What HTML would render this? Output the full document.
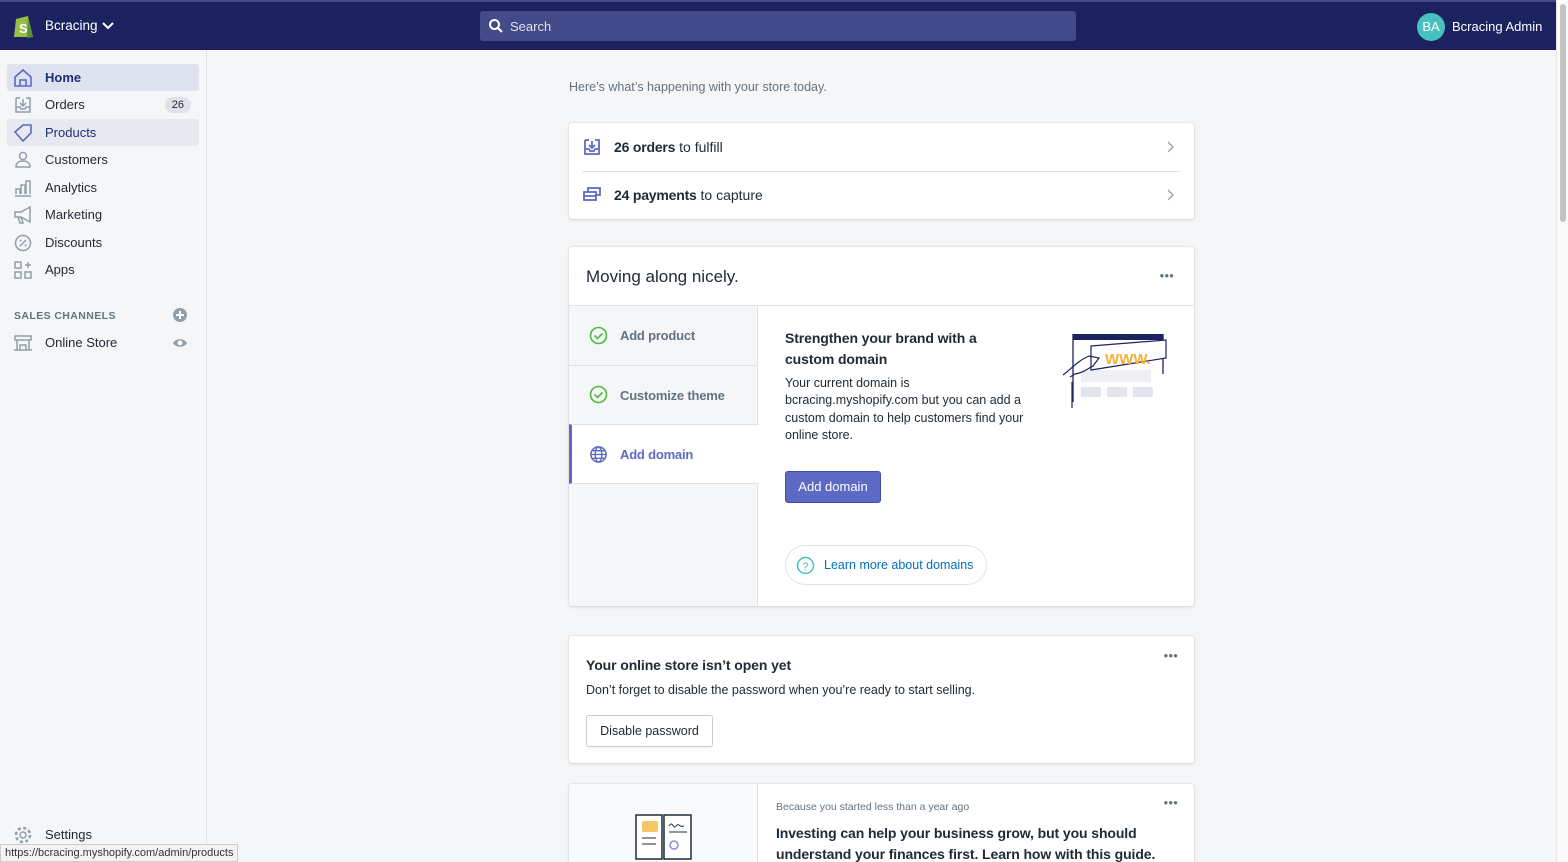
<!DOCTYPE html>
<html style="overflow:hidden;height:862px"><head><style>
*{box-sizing:border-box;margin:0;padding:0}
body{width:1568px;height:862px;overflow:hidden;background:#f4f6f8;font-family:"Liberation Sans",sans-serif;color:#212b36;position:relative;font-size:14px}
.top{position:absolute;left:0;top:0;width:1556px;height:50px;background:#1c2260;border-top:2px solid #3f4a8a}
.side{position:absolute;left:0;top:50px;width:207px;height:812px;background:#f4f6f8;border-right:1px solid #dfe3e8}
.nav{position:absolute;left:7px;width:192px;height:27px;border-radius:3px;font-size:13px;line-height:27px;padding-left:38px;color:#212b36}
.nav svg{position:absolute;left:6px;top:4px}
.card{position:absolute;left:569px;width:625px;background:#fff;border-radius:3px;box-shadow:0 0 0 1px rgba(63,63,68,.05),0 1px 3px rgba(63,63,68,.15)}
.sb{position:absolute;right:0;top:0;width:12px;height:862px;background:#fafafa;border-left:1px solid #e8e8e8}
.sb div{position:absolute;left:3px;top:4px;width:6px;height:218px;border-radius:3px;background:#c2c2c2}
b{letter-spacing:-.2px}
.dots{position:absolute;font-size:8px;color:#637381;letter-spacing:0}
</style></head><body>
<div class="top">
<svg style="position:absolute;left:13px;top:11px" width="22" height="26" viewBox="0 0 22 26"><path d="M3 6 L15 3 L20 24 L1 24 Z" fill="#95bf47"/><path d="M15 3 L20 24 L14 25 Z" fill="#5e8e3e"/><text x="6" y="20" font-size="13" font-weight="bold" fill="#fff" font-family="Liberation Sans">S</text></svg>
<div style="position:absolute;left:45px;top:16px;color:#fff;font-size:13.5px">Bcracing</div>
<svg style="position:absolute;left:102px;top:20px" width="12" height="8"><path d="M1 1l5 5 5-5" stroke="#fff" stroke-width="2" fill="none"/></svg>
<div style="position:absolute;left:480px;top:9px;width:596px;height:30px;background:#434a8a;border-radius:3px"><svg style="position:absolute;left:8px;top:7px" width="16" height="16"><circle cx="6.5" cy="6.5" r="4.5" stroke="#fff" stroke-width="2" fill="none"/><path d="M10 10l4 4" stroke="#fff" stroke-width="2"/></svg><span style="position:absolute;left:30px;top:8px;color:#dfe3e8;font-size:13px">Search</span></div>
<div style="position:absolute;left:1417px;top:11px;width:28px;height:28px;border-radius:50%;background:#47c1bf;color:#fff;font-size:13px;line-height:28px;text-align:center">BA</div>
<div style="position:absolute;left:1452px;top:17px;color:#fff;font-size:13px">Bcracing Admin</div>
</div>
<div class="side">
<div class="nav" style="top:14px;background:#dfe3ef;color:#202e78;font-weight:bold"><svg width="20" height="20" viewBox="0 0 20 20"><path d="M2 9L10 2l8 7v9H2z M7 18v-6h6v6" stroke="#5c6ac4" stroke-width="1.6" fill="none"/></svg>Home</div>
<div class="nav" style="top:41px"><svg width="20" height="20" viewBox="0 0 20 20"><path d="M3 3h4M13 3h4v14H3V3M3 12h4l1 2h4l1-2h4M10 4v6M7 8l3 3 3-3" stroke="#919eab" stroke-width="1.5" fill="none"/></svg>Orders<span style="position:absolute;right:8px;top:6px;background:#dfe3e8;border-radius:10px;font-size:11px;line-height:16px;padding:0 7px">26</span></div>
<div class="nav" style="top:69px;background:#e6e9ef;color:#202e78"><svg width="20" height="20" viewBox="0 0 20 20"><path d="M2 9l8-7h8v8l-8 8z" stroke="#5c6ac4" stroke-width="1.6" fill="none"/></svg>Products</div>
<div class="nav" style="top:96px"><svg width="20" height="20" viewBox="0 0 20 20"><circle cx="10" cy="6" r="3.5" stroke="#919eab" stroke-width="1.5" fill="none"/><path d="M3 17c0-4 3-6 7-6s7 2 7 6z" stroke="#919eab" stroke-width="1.5" fill="none"/></svg>Customers</div>
<div class="nav" style="top:124px"><svg width="20" height="20" viewBox="0 0 20 20"><path d="M2 18h16M3 16v-5h4v5M8 16V7h4v9M13 16V3h4v13" stroke="#919eab" stroke-width="1.5" fill="none"/></svg>Analytics</div>
<div class="nav" style="top:151px"><svg width="20" height="20" viewBox="0 0 20 20"><path d="M2 7h6l9-5v15l-9-5H2zM5 12l2 6h3l-2-6" stroke="#919eab" stroke-width="1.5" fill="none"/></svg>Marketing</div>
<div class="nav" style="top:179px"><svg width="20" height="20" viewBox="0 0 20 20"><circle cx="10" cy="10" r="7.5" stroke="#919eab" stroke-width="1.5" fill="none"/><path d="M7 13l6-6" stroke="#919eab" stroke-width="1.5"/><circle cx="7.5" cy="7.5" r="1" fill="#919eab"/><circle cx="12.5" cy="12.5" r="1" fill="#919eab"/></svg>Discounts</div>
<div class="nav" style="top:206px"><svg width="20" height="20" viewBox="0 0 20 20"><path d="M2 2h6v6H2zM2 12h6v6H2zM12 12h6v6h-6zM15 2v6M12 5h6" stroke="#919eab" stroke-width="1.5" fill="none"/></svg>Apps</div>
<div style="position:absolute;left:14px;top:260px;font-size:10.5px;font-weight:bold;color:#637381;letter-spacing:.4px">SALES CHANNELS</div>
<svg style="position:absolute;left:172px;top:257px" width="16" height="16"><circle cx="8" cy="8" r="7" fill="#919eab"/><path d="M8 4v8M4 8h8" stroke="#fff" stroke-width="2"/></svg>
<div class="nav" style="top:279px"><svg width="20" height="20" viewBox="0 0 20 20"><path d="M2 3h16v4H2zM4 7v10h12V7M7 17v-5h6v5M1 17h18" stroke="#919eab" stroke-width="1.5" fill="none"/></svg>Online Store</div>
<svg style="position:absolute;left:172px;top:287px" width="16" height="12"><path d="M1 6c3-5 11-5 14 0-3 5-11 5-14 0z" fill="#919eab"/><circle cx="8" cy="6" r="2.5" fill="#fff"/></svg>
<div class="nav" style="top:771px"><svg width="20" height="20" viewBox="0 0 20 20"><circle cx="10" cy="10" r="3" stroke="#919eab" stroke-width="1.5" fill="none"/><circle cx="10" cy="10" r="7" stroke="#919eab" stroke-width="2.5" stroke-dasharray="3 2.5" fill="none"/></svg>Settings</div>
</div>
<div style="position:absolute;left:0;top:844px;height:18px;padding:0 4px;background:#f3f3f3;border:1px solid #ccc;font-size:11px;line-height:16px;color:#333">https://bcracing.myshopify.com/admin/products</div>
<div style="position:absolute;left:569px;top:80px;font-size:12.5px;color:#637381">Here’s what’s happening with your store today.</div>
<div class="card" style="top:123px;height:96px">
<svg style="position:absolute;left:13px;top:14px" width="20" height="20" viewBox="0 0 20 20"><path d="M3 3h4M13 3h4v14H3V3M3 12h4l1 2h4l1-2h4M10 4v6M7 8l3 3 3-3" stroke="#5c6ac4" stroke-width="1.8" fill="none"/></svg>
<div style="position:absolute;left:45px;top:16px;font-size:14px"><b>26 orders</b> to fulfill</div>
<div style="position:absolute;left:13px;right:13px;top:48px;border-top:1px solid #dfe3e8"></div>
<svg style="position:absolute;left:13px;top:62px" width="20" height="20" viewBox="0 0 20 20"><path d="M6 3h12v7h-4v5H2V7h4zM6 7h8v3M2 11h12" stroke="#5c6ac4" stroke-width="1.8" fill="none"/></svg>
<div style="position:absolute;left:45px;top:64px;font-size:14px"><b>24 payments</b> to capture</div>
<svg style="position:absolute;left:598px;top:18px" width="8" height="12"><path d="M1 1l5 5-5 5" stroke="#919eab" stroke-width="1.3" fill="none"/></svg>
<svg style="position:absolute;left:598px;top:66px" width="8" height="12"><path d="M1 1l5 5-5 5" stroke="#919eab" stroke-width="1.3" fill="none"/></svg>
</div>
<div class="card" style="top:247px;height:359px;overflow:hidden">
<div style="position:absolute;left:17px;top:20px;font-size:17px">Moving along nicely.</div>
<div class="dots" style="right:20px;top:24px">●●●</div>
<div style="position:absolute;left:0;right:0;top:58px;border-top:1px solid #dfe3e8"></div>
<div style="position:absolute;left:0;top:59px;width:189px;height:300px;background:#f4f6f8;border-right:1px solid #dfe3e8"></div>
<div style="position:absolute;left:0;top:118px;width:189px;border-top:1px solid #dfe3e8"></div>
<div style="position:absolute;left:0;top:177px;width:190px;height:60px;background:#fff;border-left:3px solid #5c6ac4;border-top:1px solid #dfe3e8;border-bottom:1px solid #dfe3e8"></div>
<svg style="position:absolute;left:20px;top:79px" width="19" height="19"><circle cx="9.5" cy="9.5" r="8" stroke="#50b83c" stroke-width="1.6" fill="none"/><path d="M5.5 9.5l3 3 5-5" stroke="#50b83c" stroke-width="1.6" fill="none"/></svg>
<div style="position:absolute;left:51px;top:81px;font-size:13px;font-weight:bold;color:#637381;letter-spacing:-.2px">Add product</div>
<svg style="position:absolute;left:20px;top:138px" width="19" height="19"><circle cx="9.5" cy="9.5" r="8" stroke="#50b83c" stroke-width="1.6" fill="none"/><path d="M5.5 9.5l3 3 5-5" stroke="#50b83c" stroke-width="1.6" fill="none"/></svg>
<div style="position:absolute;left:51px;top:141px;font-size:13px;font-weight:bold;color:#637381;letter-spacing:-.2px">Customize theme</div>
<svg style="position:absolute;left:20px;top:198px" width="19" height="19" viewBox="0 0 20 20"><circle cx="10" cy="10" r="8" stroke="#5c6ac4" stroke-width="1.6" fill="none"/><ellipse cx="10" cy="10" rx="3.5" ry="8" stroke="#5c6ac4" stroke-width="1.5" fill="none"/><path d="M2 10h16M3.5 6h13M3.5 14h13" stroke="#5c6ac4" stroke-width="1.4"/></svg>
<div style="position:absolute;left:51px;top:200px;font-size:13px;font-weight:bold;color:#5c6ac4;letter-spacing:-.2px">Add domain</div>
<div style="position:absolute;left:216px;top:81px;width:210px;font-size:14px;font-weight:bold;line-height:21px;letter-spacing:-.1px">Strengthen your brand with a custom domain</div>
<div style="position:absolute;left:216px;top:128px;width:250px;font-size:12.5px;line-height:17.3px;color:#212b36">Your current domain is bcracing.myshopify.com but you can add a custom domain to help customers find your online store.</div>
<div style="position:absolute;left:216px;top:224px;width:96px;height:32px;background:#5c6ac4;border:1px solid #3f4eae;border-radius:3px;color:#fff;font-size:13px;line-height:30px;text-align:center">Add domain</div>
<div style="position:absolute;left:216px;top:298px;width:202px;height:40px;border:1px solid #dfe3e8;border-radius:20px"><svg style="position:absolute;left:10px;top:10px" width="19" height="19"><circle cx="9.5" cy="9.5" r="8" stroke="#47c1bf" stroke-width="1.5" fill="none"/><text x="6.3" y="14" font-size="11" fill="#47c1bf" font-family="Liberation Sans">?</text></svg><span style="position:absolute;left:38px;top:12px;font-size:12.5px;color:#006fbb">Learn more about domains</span></div>
<svg style="position:absolute;left:492px;top:85px" width="106" height="76" viewBox="0 0 106 76"><rect x="12" y="2" width="90" height="6" fill="#1c2260"/><path d="M12 2v68M102 2v40" stroke="#1c2260" stroke-width="1.3"/><rect x="20" y="55" width="20" height="10" fill="#e3e5ee"/><rect x="46" y="55" width="20" height="10" fill="#e3e5ee"/><rect x="72" y="55" width="20" height="10" fill="#e3e5ee"/><rect x="20" y="38" width="70" height="12" fill="#eef0f5"/><path d="M30 14l75-6v18l-75 12z" fill="#fff" stroke="#1c2260" stroke-width="1.2"/><text x="44" y="32" font-size="15" font-weight="bold" fill="#f5b335" font-family="Liberation Sans">WWW.</text><path d="M2 43c8-6 16-15 26-19l10 2-6 8c-6 3-10 7-18 8l-5 3M11 76V50" stroke="#1c2260" stroke-width="1.2" fill="none"/></svg>
</div>
<div class="card" style="top:636px;height:127px">
<div style="position:absolute;left:17px;top:21px;font-size:14px;font-weight:bold;letter-spacing:-.1px">Your online store isn’t open yet</div>
<div class="dots" style="right:16px;top:15px">●●●</div>
<div style="position:absolute;left:17px;top:47px;font-size:12.5px">Don’t forget to disable the password when you’re ready to start selling.</div>
<div style="position:absolute;left:17px;top:79px;width:127px;height:32px;border:1px solid #c4cdd5;border-radius:3px;font-size:12.5px;line-height:30px;text-align:center;box-shadow:0 1px 0 rgba(22,29,37,.05)">Disable password</div>
</div>
<div class="card" style="top:784px;height:78px;overflow:hidden;border-radius:3px 3px 0 0">
<div style="position:absolute;left:0;top:0;width:189px;height:90px;background:#f9fafb;border-right:1px solid #dfe3e8"></div>
<svg style="position:absolute;left:65px;top:28px" width="60" height="50" viewBox="0 0 60 50"><path d="M2 3h26v44H2zM30 3h27v44H30z" fill="#fff" stroke="#212b36" stroke-width="1.5"/><rect x="8" y="9" width="16" height="11" rx="2" fill="#f5c566"/><path d="M35 14c4-6 4 4 7 0s3 2 8 0M35 20h18M8 26h14M8 32h14" stroke="#212b36" stroke-width="1" fill="none"/><circle cx="40" cy="33" r="4" fill="none" stroke="#8a8fde" stroke-width="1.5"/></svg>
<div style="position:absolute;left:207px;top:17px;font-size:10.5px;color:#637381">Because you started less than a year ago</div>
<div class="dots" style="right:16px;top:14px">●●●</div>
<div style="position:absolute;left:207px;top:39px;width:400px;font-size:14px;font-weight:bold;line-height:21px;letter-spacing:-.1px">Investing can help your business grow, but you should understand your finances first. Learn how with this guide.</div>
</div>
<div class="sb"><div></div></div>
</body></html>
